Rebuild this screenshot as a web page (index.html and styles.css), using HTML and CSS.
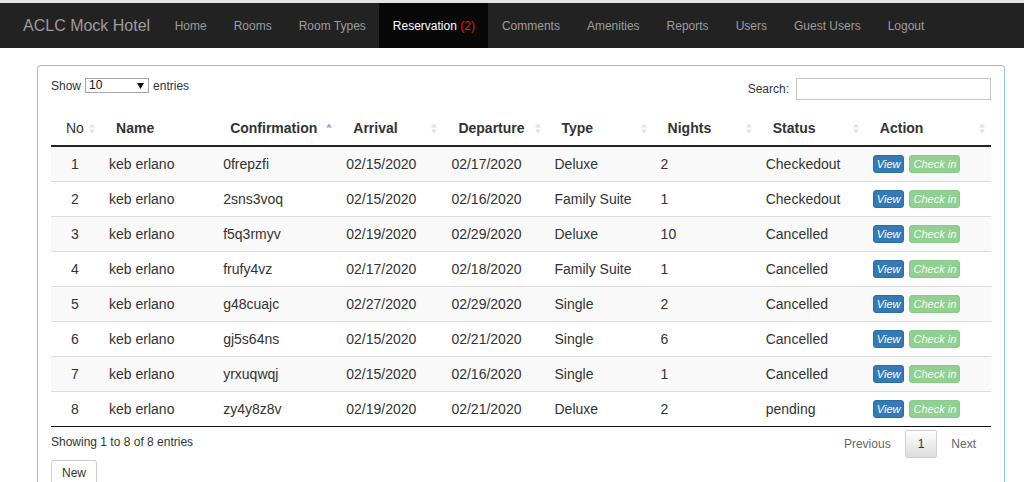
FILE: index.html
```html
<!DOCTYPE html>
<html>
<head>
<meta charset="utf-8">
<title>ACLC Mock Hotel</title>
<link rel="stylesheet" href="styles.css">
</head>
<body>
<div class="topstrip"></div>
<nav class="navbar">
  <a class="brand">ACLC Mock Hotel</a>
  <ul class="nav">
    <li><a>Home</a></li>
    <li><a>Rooms</a></li>
    <li><a>Room Types</a></li>
    <li class="active"><a>Reservation <span class="count">(2)</span></a></li>
    <li><a>Comments</a></li>
    <li><a>Amenities</a></li>
    <li><a>Reports</a></li>
    <li><a>Users</a></li>
    <li><a>Guest Users</a></li>
    <li><a>Logout</a></li>
  </ul>
</nav>

<div class="panel">
  <div class="controls">
    <div class="length">Show <span class="select"><span>10</span><svg width="7" height="6" viewBox="0 0 7 6"><path d="M0 0H7L3.5 6Z" fill="#111"/></svg></span> entries</div>
    <div class="search">Search: <span class="input"></span></div>
  </div>

  <table class="grid">
    <colgroup>
      <col style="width:50px"><col style="width:114px"><col style="width:123px"><col style="width:105px"><col style="width:103px"><col style="width:106px"><col style="width:105px"><col style="width:107px"><col style="width:126px">
    </colgroup>
    <thead>
      <tr>
        <th class="plain"><div class="th"><span>No</span><svg class="sort" width="6" height="11" viewBox="0 0 6 11"><path d="M0 4.5H6L3 0.5Z M0 6.5H6L3 10.5Z" fill="#e2e2e2"/></svg></div></th>
        <th><div class="th"><span>Name</span></div></th>
        <th><div class="th"><span>Confirmation</span><svg class="sort" width="6" height="11" viewBox="0 0 6 11"><path d="M0 4.5H6L3 0.5Z" fill="#9aa7dc"/></svg></div></th>
        <th><div class="th"><span>Arrival</span><svg class="sort" width="6" height="11" viewBox="0 0 6 11"><path d="M0 4.5H6L3 0.5Z M0 6.5H6L3 10.5Z" fill="#e2e2e2"/></svg></div></th>
        <th><div class="th"><span>Departure</span><svg class="sort" width="6" height="11" viewBox="0 0 6 11"><path d="M0 4.5H6L3 0.5Z M0 6.5H6L3 10.5Z" fill="#e2e2e2"/></svg></div></th>
        <th><div class="th"><span>Type</span><svg class="sort" width="6" height="11" viewBox="0 0 6 11"><path d="M0 4.5H6L3 0.5Z M0 6.5H6L3 10.5Z" fill="#e2e2e2"/></svg></div></th>
        <th><div class="th"><span>Nights</span><svg class="sort" width="6" height="11" viewBox="0 0 6 11"><path d="M0 4.5H6L3 0.5Z M0 6.5H6L3 10.5Z" fill="#e2e2e2"/></svg></div></th>
        <th><div class="th"><span>Status</span><svg class="sort" width="6" height="11" viewBox="0 0 6 11"><path d="M0 4.5H6L3 0.5Z M0 6.5H6L3 10.5Z" fill="#e2e2e2"/></svg></div></th>
        <th><div class="th"><span>Action</span><svg class="sort" width="6" height="11" viewBox="0 0 6 11"><path d="M0 4.5H6L3 0.5Z M0 6.5H6L3 10.5Z" fill="#e2e2e2"/></svg></div></th>
      </tr>
    </thead>
    <tbody>
      <tr><td class="no">1</td><td>keb erlano</td><td>0frepzfi</td><td>02/15/2020</td><td>02/17/2020</td><td>Deluxe</td><td>2</td><td>Checkedout</td><td><div class="acts"><span class="btn view">View</span><span class="btn checkin">Check in</span></div></td></tr>
      <tr><td class="no">2</td><td>keb erlano</td><td>2sns3voq</td><td>02/15/2020</td><td>02/16/2020</td><td>Family Suite</td><td>1</td><td>Checkedout</td><td><div class="acts"><span class="btn view">View</span><span class="btn checkin">Check in</span></div></td></tr>
      <tr><td class="no">3</td><td>keb erlano</td><td>f5q3rmyv</td><td>02/19/2020</td><td>02/29/2020</td><td>Deluxe</td><td>10</td><td>Cancelled</td><td><div class="acts"><span class="btn view">View</span><span class="btn checkin">Check in</span></div></td></tr>
      <tr><td class="no">4</td><td>keb erlano</td><td>frufy4vz</td><td>02/17/2020</td><td>02/18/2020</td><td>Family Suite</td><td>1</td><td>Cancelled</td><td><div class="acts"><span class="btn view">View</span><span class="btn checkin">Check in</span></div></td></tr>
      <tr><td class="no">5</td><td>keb erlano</td><td>g48cuajc</td><td>02/27/2020</td><td>02/29/2020</td><td>Single</td><td>2</td><td>Cancelled</td><td><div class="acts"><span class="btn view">View</span><span class="btn checkin">Check in</span></div></td></tr>
      <tr><td class="no">6</td><td>keb erlano</td><td>gj5s64ns</td><td>02/15/2020</td><td>02/21/2020</td><td>Single</td><td>6</td><td>Cancelled</td><td><div class="acts"><span class="btn view">View</span><span class="btn checkin">Check in</span></div></td></tr>
      <tr><td class="no">7</td><td>keb erlano</td><td>yrxuqwqj</td><td>02/15/2020</td><td>02/16/2020</td><td>Single</td><td>1</td><td>Cancelled</td><td><div class="acts"><span class="btn view">View</span><span class="btn checkin">Check in</span></div></td></tr>
      <tr><td class="no">8</td><td>keb erlano</td><td>zy4y8z8v</td><td>02/19/2020</td><td>02/21/2020</td><td>Deluxe</td><td>2</td><td>pending</td><td><div class="acts"><span class="btn view">View</span><span class="btn checkin">Check in</span></div></td></tr>
    </tbody>
  </table>

  <div class="footer">
    <div class="info">Showing 1 to 8 of 8 entries</div>
    <div class="pager">
      <span class="page">Previous</span>
      <span class="page current">1</span>
      <span class="page">Next</span>
    </div>
  </div>
  <div class="actions"><span class="newbtn">New</span></div>
</div>
</body>
</html>
```

FILE: styles.css
```css
* { box-sizing: border-box; }
html, body { margin: 0; padding: 0; background: #fff; }
body {
  font-family: "Liberation Sans", Arial, Helvetica, sans-serif;
  font-size: 14px;
  color: #333;
}
.topstrip { height: 3px; background: #e4e4e4; }
.navbar {
  height: 45px;
  background: #222;
  display: flex;
  align-items: stretch;
}
.brand {
  padding: 1px 11px 0 23px;
  font-size: 16px;
  line-height: 44px;
  color: #9d9d9d;
}
.nav {
  list-style: none;
  margin: 0;
  padding: 0;
  display: flex;
}
.nav li a {
  display: block;
  padding: 1px 13.5px 0;
  font-size: 12px;
  line-height: 44px;
  color: #9d9d9d;
}
.nav li.active a { background: #080808; color: #fff; }
.nav .count { color: #ee1111; }

.panel {
  margin: 17px 19px 0 37px;
  border: 1px solid #95c2e3;
  border-bottom: none;
  border-radius: 4px 4px 0 0;
  padding: 12px 13px 0 13px;
  height: 420px;
}
.controls {
  display: flex;
  justify-content: space-between;
  align-items: flex-start;
  font-size: 12px;
  height: 22px;
}
.length { display: flex; align-items: center; gap: 4px; line-height: 14px; }
.select {
  display: inline-flex;
  align-items: center;
  justify-content: space-between;
  width: 64px;
  height: 15px;
  border: 1px solid #a6a6a6;
  padding: 0 4px 0 3px;
  font-size: 12px;
  line-height: 13px;
  color: #111;
  background: #fff;
}
.search { display: flex; align-items: center; gap: 7px; height: 22px; }
.input {
  display: inline-block;
  width: 195px;
  height: 22px;
  border: 1px solid #c6c6c6;
  background: #fff;
}

.grid {
  width: 100%;
  table-layout: fixed;
  border-collapse: collapse;
  margin-top: 10px;
  border-bottom: 1px solid #111;
}
.grid th {
  text-align: left;
  font-weight: bold;
  padding: 8px 6px 7px 15px;
  line-height: 20px;
  border-bottom: 2px solid #222;
}
.grid th.plain { font-weight: normal; }
.th { display: flex; justify-content: space-between; align-items: center; }
.sort { display: block; }
.grid td {
  padding: 7px 8px;
  height: 35px;
  line-height: 20px;
  border-top: 1px solid #ddd;
  white-space: nowrap;
}
.grid tbody tr:first-child td { border-top: none; height: 34px; }
.grid tbody tr:nth-child(odd) td { background: #f9f9f9; }
.grid td.no { padding-left: 20px; }

.acts { display: flex; align-items: center; gap: 5px; height: 20px; }
.btn {
  display: block;
  height: 18px;
  padding: 0 3px;
  border: 1px solid transparent;
  border-radius: 3px;
  font-size: 11px;
  font-style: italic;
  line-height: 16px;
  color: #fff;
}
.view { background: #337ab7; border-color: #2e6da4; }
.checkin { background: #91d091; border-color: #86cb86; color: #f4fbf4; }

.footer {
  display: flex;
  justify-content: space-between;
  align-items: flex-start;
  font-size: 12px;
  height: 33px;
}
.info { padding-top: 7px; line-height: 17px; }
.pager { display: flex; margin-top: 3px; margin-right: 1px; }
.page {
  padding: 0 14px;
  line-height: 28px;
  height: 28px;
  color: #666;
}
.page.current {
  padding: 0 12px;
  border: 1px solid #cfcfcf;
  border-radius: 2px;
  color: #333;
  line-height: 26px;
  background: linear-gradient(to bottom, #fff 0%, #dcdcdc 100%);
}
.newbtn {
  display: inline-block;
  height: 26px;
  padding: 4px 10px;
  border: 1px solid #ccc;
  border-radius: 3px;
  font-size: 12px;
  line-height: 16px;
  color: #333;
  background: #fff;
}
```
